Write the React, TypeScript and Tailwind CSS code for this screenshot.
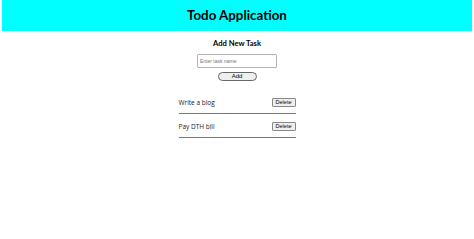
export default function App() {
  const tasks = ['Write a blog', 'Pay DTH bill'];
  return (
    <div className="w-[474px] h-[239px] bg-white font-['Lato',sans-serif] text-black">
      <header className="mx-[2px] h-[31px] bg-[#00ffff] flex items-center justify-center">
        <h1 className="text-[13.3px] font-bold">Todo Application</h1>
      </header>
      <div className="flex flex-col items-center">
        <h2 className="mt-[7px] text-[7.6px] font-bold leading-[10px]">Add New Task</h2>
        <input
          placeholder="Enter task name"
          className="mt-[6px] w-[80px] h-[14px] border border-[#b5b5b5] rounded-[1px] px-[2px] text-[5px] font-['Liberation_Sans',sans-serif] placeholder:text-[#777]"
        />
        <button className="mt-[4px] w-[39px] h-[9px] border border-[#666] rounded-full bg-[#efefef] text-[6px] leading-[7px] font-['Liberation_Sans',sans-serif]">
          Add
        </button>
        <div className="mt-[18px] w-[117px] flex flex-col gap-[9px]">
          {tasks.map((t) => (
            <div key={t} className="flex items-center justify-between h-[15px] border-b border-[#777]">
              <span className="text-[6.5px] pb-[7px] text-[#222] font-['Open_Sans',sans-serif]">{t}</span>
              <button className="mb-[7px] px-[3px] h-[9px] border border-[#888] rounded-[1px] bg-[#efefef] text-[5.5px] leading-[7px] font-['Liberation_Sans',sans-serif]">
                Delete
              </button>
            </div>
          ))}
        </div>
      </div>
    </div>
  );
}
